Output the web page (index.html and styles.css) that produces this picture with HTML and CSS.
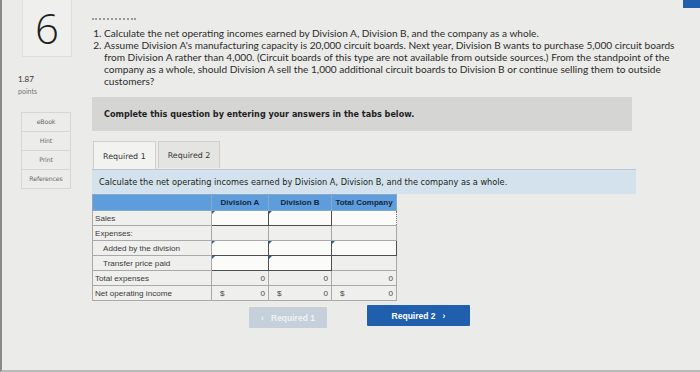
FILE: index.html
```html
<!DOCTYPE html>
<html lang="en">
  <head>
    <meta charset="UTF-8" />
    <meta name="viewport" content="width=device-width, initial-scale=1.0" />
    <title>Question 6</title>
    <link rel="stylesheet" href="styles.css">
  </head>
  <body>
    <div class="corner"></div>
    <div class="page">
      <aside class="side">
        <div class="qnum">6</div>
        <div class="points">
          <span class="points-val">1.87</span>
          <span class="points-lbl">points</span>
        </div>
        <ul class="tools">
          <li>eBook</li>
          <li>Hint</li>
          <li>Print</li>
          <li>References</li>
        </ul>
      </aside>

      <main class="main">
        <div class="crumb"></div>
        <ol class="question">
          <li>Calculate the net operating incomes earned by Division A, Division B, and the company as a whole.</li>
          <li>Assume Division A's manufacturing capacity is 20,000 circuit boards. Next year, Division B wants to purchase 5,000 circuit boards<br>
            from Division A rather than 4,000. (Circuit boards of this type are not available from outside sources.) From the standpoint of the<br>
            company as a whole, should Division A sell the 1,000 additional circuit boards to Division B or continue selling them to outside<br>
            customers?</li>
        </ol>

        <div class="notice">Complete this question by entering your answers in the tabs below.</div>

        <div class="tabs">
          <div class="tab active">Required 1</div>
          <div class="tab">Required 2</div>
        </div>
        <div class="instruction">Calculate the net operating incomes earned by Division A, Division B, and the company as a whole.</div>

        <table class="grid">
          <thead>
            <tr>
              <th class="lbl"></th>
              <th>Division A</th>
              <th>Division B</th>
              <th>Total Company</th>
            </tr>
          </thead>
          <tbody>
            <tr>
              <td class="lbl">Sales</td>
              <td class="input"></td>
              <td class="input"></td>
              <td class="input dotted"></td>
            </tr>
            <tr>
              <td class="lbl">Expenses:</td>
              <td></td>
              <td></td>
              <td></td>
            </tr>
            <tr>
              <td class="lbl indent">Added by the division</td>
              <td class="input"></td>
              <td class="input"></td>
              <td class="input"></td>
            </tr>
            <tr>
              <td class="lbl indent">Transfer price paid</td>
              <td class="input"></td>
              <td class="input"></td>
              <td></td>
            </tr>
            <tr>
              <td class="lbl">Total expenses</td>
              <td class="num">0</td>
              <td class="num">0</td>
              <td class="num">0</td>
            </tr>
            <tr>
              <td class="lbl">Net operating income</td>
              <td class="num"><span class="cur">$</span>0</td>
              <td class="num"><span class="cur">$</span>0</td>
              <td class="num"><span class="cur">$</span>0</td>
            </tr>
          </tbody>
        </table>

        <div class="nav">
          <button class="btn prev" disabled>&lsaquo;&nbsp;&nbsp; Required 1</button>
          <button class="btn next">Required 2 &nbsp;&nbsp;&rsaquo;</button>
        </div>
      </main>
    </div>
  </body>
</html>
```

FILE: styles.css
```css
body {
  margin: 0;
  height: 372px;
  overflow: hidden;
  background-color: #ebebe9;
  border-left: 2px solid #8a8a88;
  border-bottom: 2px solid #b9b9b7;
  box-sizing: border-box;
  font-family: "Liberation Sans", Arial, sans-serif;
  color: #2a2a2a;
}
.corner {
  position: absolute;
  top: 0;
  right: 0;
  width: 17px;
  height: 8px;
  background: #1f5fad;
}
.page {
  display: flex;
}
.side {
  width: 90px;
  flex-shrink: 0;
}
.qnum {
  margin-left: 20px;
  width: 50px;
  height: 57px;
  box-sizing: border-box;
  background: #efefed;
  border: 1px solid #dededc;
  border-top: none;
  font-family: "Open Sans", sans-serif;
  font-size: 42px;
  font-weight: 300;
  color: #1e1e1e;
  text-align: center;
  line-height: 56px;
}
.points {
  margin: 17px 0 0 16px;
  display: flex;
  flex-direction: column;
  font-family: "Lato", sans-serif;
}
.points-val {
  font-size: 8px;
  color: #333;
}
.points-lbl {
  font-size: 7px;
  color: #777;
  margin-top: 3px;
}
.tools {
  list-style: none;
  margin: 17px 0 0 19px;
  padding: 0;
  width: 48px;
  border: 1px solid #d6d6d4;
  background: #ececea;
}
.tools li {
  height: 18px;
  line-height: 18px;
  border-top: 1px solid #d6d6d4;
  text-align: center;
  font-family: "DejaVu Sans", Verdana, sans-serif;
  font-size: 6.2px;
  color: #6a6a6a;
  white-space: nowrap;
  letter-spacing: -0.1px;
}
.tools li:first-child {
  border-top: none;
}
.main {
  flex: 1;
  padding-top: 18px;
}
.crumb {
  width: 44px;
  height: 0;
  border-top: 2px dotted #9a9a9a;
  margin-bottom: 7px;
}
.question {
  margin: 0;
  padding-left: 12px;
  font-family: "Lato", sans-serif;
  font-size: 10.1px;
  line-height: 12px;
  color: #2b2b2b;
  white-space: nowrap;
}
.notice {
  margin-top: 10px;
  width: 540px;
  height: 34px;
  box-sizing: border-box;
  padding-left: 12px;
  line-height: 34px;
  background: #d5d5d3;
  font-family: "DejaVu Sans", Verdana, sans-serif;
  font-weight: bold;
  font-size: 8.1px;
  color: #1e1e1e;
}
.tabs {
  display: flex;
  gap: 2px;
  margin-top: 10px;
  padding-left: 1px;
}
.tab {
  height: 27px;
  line-height: 27px;
  padding: 0 9px;
  box-sizing: border-box;
  border: 1px solid #cfcfcd;
  border-bottom: none;
  background: #e4e4e2;
  font-family: "DejaVu Sans", Verdana, sans-serif;
  font-size: 7.9px;
  color: #333;
}
.tab.active {
  background: #f2f2f0;
  height: 28px;
  line-height: 30px;
}
.instruction {
  width: 544px;
  height: 25px;
  line-height: 25px;
  box-sizing: border-box;
  padding-left: 7px;
  background: #d3e2ec;
  border-top: 1px solid #b7c8d4;
  font-family: "DejaVu Sans", Verdana, sans-serif;
  font-size: 8.2px;
  color: #222;
}
.grid {
  border-collapse: collapse;
  font-size: 8.1px;
  color: #333;
}
.grid th {
  height: 15px;
  padding: 0 3px;
  background: #5e9ddc;
  border: 1px solid #8aa8c6;
  font-weight: bold;
  font-size: 8px;
  color: #16263a;
  white-space: nowrap;
}
.grid th:nth-child(1) { width: 112px; }
.grid th:nth-child(2) { width: 50px; }
.grid th:nth-child(3) { width: 56px; }
.grid th:nth-child(4) { width: 58px; }
.grid td {
  height: 14px;
  padding: 0 3px;
  border: 1px solid #a9a9a7;
  background: #efefed;
  white-space: nowrap;
}
.grid td.lbl {
  padding-left: 2px;
  color: #3a3a3a;
}
.grid td.indent {
  padding-left: 10px;
}
.grid td.input {
  position: relative;
  background: #fbfbfa;
  border: 1px solid #4e4e4e;
}
.grid td.input::before {
  content: "";
  position: absolute;
  top: 0;
  left: 0;
  border-top: 3px solid #2f5e9e;
  border-right: 3px solid transparent;
}
.grid td.dotted {
  border: 1px dotted #777;
}
.grid td.dotted::before {
  display: none;
}
.grid td.num {
  text-align: right;
  color: #444;
}
.cur {
  float: left;
  padding-left: 5px;
}
.nav {
  display: flex;
  gap: 40px;
  margin: 4px 0 0 157px;
}
.btn {
  height: 21px;
  border: none;
  border-radius: 1px;
  font-family: "Liberation Sans", Arial, sans-serif;
  font-weight: bold;
  font-size: 8.5px;
}
.btn.prev {
  width: 78px;
  margin-top: 2px;
  background: #c6d0da;
  color: #eef2f6;
}
.btn.next {
  width: 103px;
  background: #1f5fad;
  color: #fff;
}
```
